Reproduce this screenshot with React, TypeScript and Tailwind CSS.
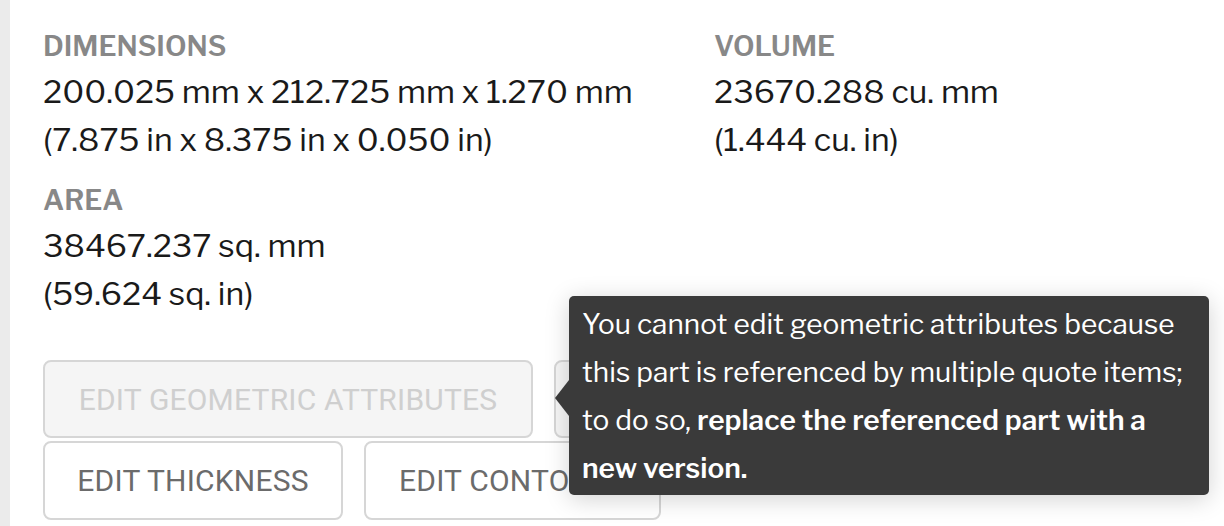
export default function App() {
  const font = { fontFamily: '"Libre Franklin", Inter, "Liberation Sans", sans-serif' }
  const btnFont = { fontFamily: 'Roboto, "Liberation Sans", sans-serif' }
  return (
    <div className="flex min-h-[526px] w-[1224px] overflow-hidden bg-white" style={font}>
      <div className="w-[10px] shrink-0 bg-[#ebebeb]" />
      <div className="flex-1 pl-[33px] pt-[29px]">
        <div className="grid grid-cols-[671px_1fr]">
          <div>
            <div className="text-[28px] font-semibold leading-[34px] text-[#888]">DIMENSIONS</div>
            <div className="pt-[5px] text-[32px] leading-[48px] text-[#1a1a1a]">
              <div>200.025 mm x 212.725 mm x 1.270 mm</div>
              <div>(7.875 in x 8.375 in x 0.050 in)</div>
            </div>
          </div>
          <div>
            <div className="text-[28px] font-semibold leading-[34px] text-[#888]">VOLUME</div>
            <div className="pt-[5px] text-[32px] leading-[48px] text-[#1a1a1a]">
              <div>23670.288 cu. mm</div>
              <div>(1.444 cu. in)</div>
            </div>
          </div>
        </div>
        <div className="mt-[19px]">
          <div className="text-[28px] font-semibold leading-[34px] text-[#888]">AREA</div>
          <div className="pt-[5px] text-[32px] leading-[48px] text-[#1a1a1a]">
            <div>38467.237 sq. mm</div>
            <div>(59.624 sq. in)</div>
          </div>
        </div>

        <div className="relative mt-[42px]">
          <div className="flex gap-[21px]">
            <button
              disabled
              className="h-[78px] w-[490px] rounded-[8px] border-2 border-[#d6d6d6] bg-[#f5f5f5] text-[30px] tracking-[0.2px] text-[#cfcfcf]"
              style={btnFont}
            >
              EDIT GEOMETRIC ATTRIBUTES
            </button>
            <button
              className="h-[78px] w-[300px] rounded-[8px] border-2 border-[#d6d6d6] bg-[#f5f5f5] text-[30px] text-[#cfcfcf]"
              style={btnFont}
            >
              EDIT
            </button>
          </div>
          <div className="mt-[3px] flex gap-[21px]">
            <button
              className="h-[79px] w-[300px] rounded-[8px] border-2 border-[#d6d6d6] bg-white text-[30px] tracking-[0.2px] text-[#6b6b6b]"
              style={btnFont}
            >
              EDIT THICKNESS
            </button>
            <button
              className="h-[79px] w-[297px] rounded-[8px] border-2 border-[#d6d6d6] bg-white pl-[33px] text-left text-[30px] tracking-[0.2px] text-[#6b6b6b]"
              style={btnFont}
            >
              EDIT CONTOUR
            </button>
          </div>

          {/* tooltip for the disabled geometric attributes action */}
          <div className="absolute left-[526px] top-[-64px] w-[640px] rounded-[5px] bg-[#3a3a3a] pb-[3px] pl-[13px] pr-[24px] pt-[4px] text-[28px] leading-[48px] text-white shadow-[0_4px_24px_rgba(0,0,0,0.18)]">
            <div className="absolute left-[-14px] top-[84px] h-0 w-0 border-y-[18px] border-r-[14px] border-y-transparent border-r-[#3a3a3a]" />
            You cannot edit geometric attributes because this part is referenced by multiple quote items; to do so,{" "}
            <span className="font-semibold">replace the referenced part with a new version.</span>
          </div>
        </div>
      </div>
    </div>
  )
}
